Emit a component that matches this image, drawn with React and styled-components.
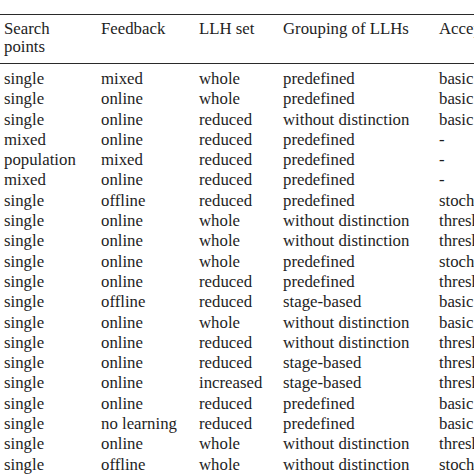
import React from "react";
import styled, { createGlobalStyle } from "styled-components";

const GlobalStyle = createGlobalStyle`
  html, body {
    margin: 0;
    padding: 0;
    background: #ffffff;
    overflow: hidden;
  }
`;

const Page = styled.div`
  width: 474px;
  height: 474px;
  overflow: hidden;
  padding-top: 14px;
  box-sizing: border-box;
  font-family: "Liberation Serif", "Times New Roman", serif;
  font-size: 16.8px;
  color: #1e1e1e;
`;

const Table = styled.div`
  width: 600px;
  border-top: 1.5px solid #2a2a2a;
`;

const Columns = `
  display: grid;
  grid-template-columns: 97px 98px 84px 156px 165px;
`;

const Header = styled.div`
  ${Columns}
  line-height: 18px;
  padding: 5px 0 7px;
  border-bottom: 1.5px solid #2a2a2a;
`;

const Body = styled.div`
  padding-top: 5px;
`;

const Row = styled.div`
  ${Columns}
  line-height: 20.3px;
`;

const Cell = styled.div`
  padding-left: 4px;
  white-space: nowrap;
`;

const HeadCell = styled(Cell)`
  white-space: normal;
`;

const rows = [
  ["single", "mixed", "whole", "predefined", "basic"],
  ["single", "online", "whole", "predefined", "basic"],
  ["single", "online", "reduced", "without distinction", "basic"],
  ["mixed", "online", "reduced", "predefined", "-"],
  ["population", "mixed", "reduced", "predefined", "-"],
  ["mixed", "online", "reduced", "predefined", "-"],
  ["single", "offline", "reduced", "predefined", "stochastic"],
  ["single", "online", "whole", "without distinction", "threshold"],
  ["single", "online", "whole", "without distinction", "threshold"],
  ["single", "online", "whole", "predefined", "stochastic"],
  ["single", "online", "reduced", "predefined", "threshold"],
  ["single", "offline", "reduced", "stage-based", "basic"],
  ["single", "online", "whole", "without distinction", "basic"],
  ["single", "online", "reduced", "without distinction", "threshold"],
  ["single", "online", "reduced", "stage-based", "threshold"],
  ["single", "online", "increased", "stage-based", "threshold"],
  ["single", "online", "reduced", "predefined", "basic"],
  ["single", "no learning", "reduced", "predefined", "basic"],
  ["single", "online", "whole", "without distinction", "threshold"],
  ["single", "offline", "whole", "without distinction", "stochastic"],
];

export default function App() {
  return (
    <>
      <GlobalStyle />
      <Page>
        <Table>
          <Header>
            <HeadCell>Search<br />points</HeadCell>
            <HeadCell>Feedback</HeadCell>
            <HeadCell>LLH set</HeadCell>
            <HeadCell>Grouping of LLHs</HeadCell>
            <HeadCell>Acceptance</HeadCell>
          </Header>
          <Body>
            {rows.map((r, i) => (
              <Row key={i}>
                {r.map((c, j) => (
                  <Cell key={j}>{c}</Cell>
                ))}
              </Row>
            ))}
          </Body>
        </Table>
      </Page>
    </>
  );
}
